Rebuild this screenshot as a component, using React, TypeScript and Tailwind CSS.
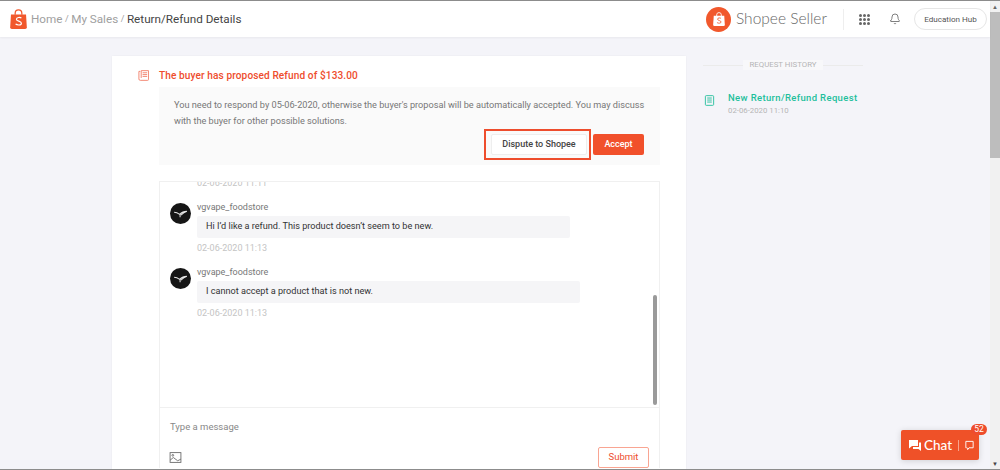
import { Bell } from "lucide-react";

function ShopeeBag({ className, bag = "#f1582c", letter = "#fff" }: { className?: string; bag?: string; letter?: string }) {
  return (
    <svg viewBox="0 0 20 24" className={className}>
      <path d="M1 6.500h18l1 15.500a2 2 0 0 1-2 2H2a2 2 0 0 1-2-2z" fill={bag} />
      <path d="M6 7V5a4 4 0 0 1 8 0v2" fill="none" stroke={bag} strokeWidth="1.500" />
      <path d="M13.500 11c-1.200-1.200-6-1.500-6 1.300 0 2.800 6 1.800 6 4.800 0 2.800-5 2.500-7 1" fill="none" stroke={letter} strokeWidth="1.400" />
    </svg>
  );
}

function NoteIcon({ color }: { color: string }) {
  return (
    <svg viewBox="0 0 12 12" className="h-[11px] w-[11px]" fill="none" stroke={color} strokeWidth="1">
      <rect x="1.500" y="0.700" width="9" height="10.600" rx="1" />
      <path d="M3.500 3.300h5M3.500 5.500h5M3.500 7.700h5" />
    </svg>
  );
}

function StackedNoteIcon() {
  return (
    <svg viewBox="0 0 12 12" className="h-[11px] w-[11px]" fill="none" stroke="#f2806a" strokeWidth="1">
      <path d="M2.500 1.500H1v8.300a1.500 1.500 0 0 0 1.500 1.500h8a1 1 0 0 0 1-1V.700h-8v8" />
      <path d="M5 3h5M5 5h5M5 7h5" />
    </svg>
  );
}

function Avatar() {
  return (
    <div className="flex h-[21px] w-[21px] shrink-0 items-center justify-center rounded-full bg-[#161616]">
      <svg viewBox="0 0 20 20" className="h-[17px] w-[17px]" fill="none" stroke="#e8e8e8" strokeWidth="1.200">
        <path d="M2.500 8.500c2.500 0 4.500 1 6.500 2.500 2-2 5-3.500 8.500-3.500-3 1-5 2.500-7 4.500M9.500 11v3.500" />
      </svg>
    </div>
  );
}

function Message({ text, bubble, time }: { text: string; bubble: string; time: string }) {
  return (
    <div className="flex gap-[6px] pl-[10px]">
      <div className="pt-[5px]">
        <Avatar />
      </div>
      <div className="pt-[3px]">
        <p className="text-[9px] leading-[12px] text-[#777]">vgvape_foodstore</p>
        <div className={`mt-[3px] flex h-[22px] items-center rounded-[2px] bg-[#f5f5f7] pl-[9px] text-[9.150px] text-[#333] ${bubble}`}>
          {text}
        </div>
        <p className="mt-[4px] text-[9px] leading-[12px] text-[#c4c4c4]">{time}</p>
      </div>
    </div>
  );
}

export default function App() {
  return (
    <div className="flex h-[470px] w-[1000px] overflow-hidden border-y border-[#8c8c8c] bg-[#f4f4f9] font-['Roboto',sans-serif]">
      <div className="relative w-[990px]">
        <header className="flex h-[36px] items-center bg-white pl-[10px] pr-[3px] shadow-[0_1px_2px_rgba(0,0,0,0.05)]">
          <ShopeeBag className="h-[20px] w-[17px]" />
          <div className="ml-[4px] flex items-center pt-[1px] text-[11.700px] text-[#a0a0a0]">
            <span>Home</span>
            <span className="mx-[2.500px] text-[9px]">/</span>
            <span>My Sales</span>
            <span className="mx-[2.500px] text-[9px]">/</span>
            <span className="text-[#444]">Return/Refund Details</span>
          </div>
          <div className="ml-auto flex items-center">
            <div className="flex h-[25px] w-[25px] items-center justify-center rounded-full bg-[#f1582c]">
              <ShopeeBag className="h-[14px] w-[12px]" bag="#fff" letter="#f1582c" />
            </div>
            <span className="ml-[5px] w-[92px] whitespace-nowrap font-['Lato',sans-serif] text-[15.500px] font-light text-[#666]">Shopee Seller</span>
            <div className="ml-[15px] h-[21px] w-px bg-[#eee]" />
            <div className="ml-[15px] grid grid-cols-3 gap-[1px]">
              {[0, 1, 2, 3, 4, 5, 6, 7, 8].map((n) => (
                <span key={n} className="h-[3px] w-[3px] rounded-full bg-[#666]" />
              ))}
            </div>
            <Bell className="ml-[19px] h-[12px] w-[12px] text-[#555]" strokeWidth={1.500} />
            <div className="ml-[13px] flex h-[22px] w-[73px] items-center justify-center rounded-full border border-[#e6e6e6] text-[8.100px] text-[#555]">
              Education Hub
            </div>
          </div>
        </header>

        <div className="flex gap-[17px] pl-[112px] pt-[19px]">
          <main className="h-[420px] w-[574px] bg-white pl-[26px] pr-[26px] pt-[13px] shadow-[0_0_2px_rgba(0,0,0,0.05)]">
            <div className="flex items-center gap-[10px]">
              <StackedNoteIcon />
              <h1 className="text-[10.100px] font-medium leading-[13px] tracking-[0.1px] text-[#ee4d2d]">
                The buyer has proposed Refund of $133.00
              </h1>
            </div>
            <section className="ml-[21px] mt-[5px] h-[78px] bg-[#fafafa] pl-[15px] pr-[16px] pt-[10px]">
              <p className="whitespace-nowrap text-[9.160px] leading-[16px] text-[#777]">
                You need to respond by 05-06-2020, otherwise the buyer's proposal will be automatically accepted. You may discuss
                <br />
                with the buyer for other possible solutions.
              </p>
              <div className="mt-[5px] flex justify-end gap-[6px]">
                <button className="relative flex h-[21px] w-[96px] items-center justify-center rounded-[2px] border border-[#eee] bg-white text-[9px] font-medium text-[#444]">
                  Dispute to Shopee
                  <span className="absolute left-[-8px] top-[-6px] h-[31px] w-[107px] border-[2px] border-[#ee4d2d]" />
                </button>
                <button className="h-[21px] w-[51px] rounded-[2px] bg-[#f1502b] text-[9px] font-medium text-white">Accept</button>
              </div>
            </section>

            <section className="relative ml-[21px] mt-[16px] h-[287px] border border-b-0 border-[#f0f0f0]">
              <div className="h-[226px] overflow-hidden border-b border-[#f0f0f0]">
                <p className="h-[16px] pl-[37px] text-[9px] leading-[2px] text-[#c4c4c4]">02-06-2020 11:11</p>
                <div className="flex flex-col gap-[9px]">
                  <Message text="Hi I’d like a refund. This product doesn’t seem to be new." bubble="w-[373px]" time="02-06-2020 11:13" />
                  <Message text="I  cannot accept a product that is not new." bubble="w-[383px]" time="02-06-2020 11:13" />
                </div>
              </div>
              <div className="absolute right-[2px] top-[113px] h-[110px] w-[4px] rounded-full bg-[#9a9a9a]" />
              <div className="pl-[10px] pt-[12px] text-[9.500px] leading-[13px] text-[#888]">Type a message</div>
              <div className="flex items-center justify-between pl-[9px] pr-[10px] pt-[14px]">
                <svg viewBox="0 0 12 12" className="h-[13px] w-[13px]" fill="none" stroke="#666" strokeWidth="0.800">
                  <rect x="1" y="1.500" width="10" height="9" />
                  <path d="M1 8.500l3-2.500 4 3 3-1.500" />
                  <circle cx="3.500" cy="4" r="0.800" />
                </svg>
                <button className="h-[21px] w-[51px] rounded-[2px] border border-[#f9a592] bg-white text-[9.500px] text-[#ee4d2d]">Submit</button>
              </div>
            </section>
          </main>

          <aside className="w-[160px]">
            <div className="flex items-center pt-[4px]">
              <div className="h-px flex-1 bg-[#ebebeb]" />
              <span className="bg-[#f8f8fa] px-[6px] text-[7.850px] leading-[10px] text-[#b5b5b5]">REQUEST HISTORY</span>
              <div className="h-px flex-1 bg-[#ebebeb]" />
            </div>
            <div className="mt-[21px] flex pl-[1px]">
              <div className="pt-[4px]">
                <NoteIcon color="#26bf9e" />
              </div>
              <div className="ml-[13px]">
                <p className="whitespace-nowrap text-[9.500px] font-medium leading-[14px] tracking-[0.35px] text-[#1fbf9c]">New Return/Refund Request</p>
                <p className="text-[7.800px] leading-[12px] text-[#b5b5b5]">02-06-2020 11:10</p>
              </div>
            </div>
          </aside>
        </div>

        <div className="absolute left-[901px] top-[429px] flex h-[30px] w-[78px] items-center rounded-[2px] bg-[#ef5128] pl-[7px] text-white shadow-[0_1px_6px_rgba(0,0,0,0.15)]">
          <svg viewBox="0 0 14 14" className="h-[14px] w-[14px]" fill="#fff">
            <path d="M1 2h9v6H4L1 10.500zM11 4.500h2V13l-2.500-2H5V9h6z" />
          </svg>
          <span className="ml-[2px] font-['Lato',sans-serif] text-[13.500px] font-medium">Chat</span>
          <div className="ml-[6px] h-[11px] w-px bg-[#f7a48c]" />
          <svg viewBox="0 0 12 12" className="ml-[5px] h-[11px] w-[11px]" fill="none" stroke="#fff" strokeWidth="1">
            <path d="M2 1.500h8v7H5.500L4 10.500V8.500M2 1.500v7h1" />
          </svg>
          <span className="absolute left-[70px] top-[-6px] flex h-[11px] w-[16px] items-center justify-center rounded-full bg-[#ee4d2d] text-[8.500px] text-white">52</span>
        </div>
      </div>

      <div className="flex w-[10px] flex-col bg-[#f1f1f1]">
        <div className="flex h-[11px] items-center justify-center text-[6px] leading-none text-[#666]">▲</div>
        <div className="h-[146px] bg-[#bdbdbd]" />
        <div className="flex-1" />
        <div className="flex h-[10px] items-center justify-center text-[6px] leading-none text-[#444]">▼</div>
      </div>
    </div>
  );
}
